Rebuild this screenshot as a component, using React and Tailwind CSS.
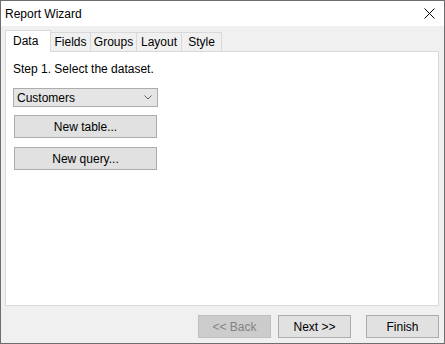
export default function App() {
  const font = { fontFamily: '"Liberation Sans", Arial, sans-serif' };
  return (
    <div
      className="w-[445px] h-[344px] border border-[#6e6e6e] bg-[#f0f0f0] flex flex-col text-[12px] text-black box-border overflow-hidden"
      style={font}
    >
      {/* Title bar */}
      <div className="h-[25px] bg-white flex items-center justify-between shrink-0">
        <span className="pl-[4px] text-[12px] leading-none">Report Wizard</span>
        <svg width="11" height="11" viewBox="0 0 11 11" className="mr-[9px]">
          <path d="M0.5 0.5 L10.5 10.5 M10.5 0.5 L0.5 10.5" stroke="#000" strokeWidth="1" />
        </svg>
      </div>

      {/* Body */}
      <div className="flex flex-col pl-[4px] pr-[5px] pt-[4px] flex-1">
        {/* Tabs */}
        <div className="flex items-end h-[21px] relative z-10">
          <div className="h-[22px] w-[46px] -mb-px bg-white border border-b-0 border-[#d9d9d9] flex items-center pl-[7px] pb-[2px]">
            Data
          </div>
          <div className="h-[19px] w-[41px] -ml-px border border-b-0 border-[#d9d9d9] flex items-center justify-center">
            Fields
          </div>
          <div className="h-[19px] w-[47px] -ml-px border border-b-0 border-[#d9d9d9] flex items-center justify-center">
            Groups
          </div>
          <div className="h-[19px] w-[46px] -ml-px border border-b-0 border-[#d9d9d9] flex items-center justify-center">
            Layout
          </div>
          <div className="h-[19px] w-[41px] -ml-px border border-b-0 border-[#d9d9d9] flex items-center justify-center">
            Style
          </div>
        </div>

        {/* Panel */}
        <div className="h-[255px] bg-white border border-[#d9d9d9] flex flex-col pl-[7px] pt-[9px] shrink-0">
          <div className="h-[16px] leading-[16px]">Step 1. Select the dataset.</div>
          <div className="mt-[11px] w-[145px] h-[19px] bg-[#e5e5e5] border border-[#adadad] flex items-center justify-between pl-[3px] pr-[5px]">
            <span className="leading-none">Customers</span>
            <svg width="8" height="5" viewBox="0 0 8 5">
              <path d="M0.5 0.5 L4 4 L7.5 0.5" stroke="#606060" strokeWidth="1" fill="none" />
            </svg>
          </div>
          <div className="mt-[8px] ml-px w-[143px] h-[23px] bg-[#e1e1e1] border border-[#adadad] flex items-center justify-center">
            New table...
          </div>
          <div className="mt-[9px] ml-px w-[143px] h-[23px] bg-[#e1e1e1] border border-[#adadad] flex items-center justify-center">
            New query...
          </div>
        </div>

        {/* Bottom buttons */}
        <div className="mt-[9px] flex justify-end">
          <div className="w-[73px] h-[23px] bg-[#cccccc] border border-[#bfbfbf] text-[#838383] flex items-center justify-center">
            &lt;&lt; Back
          </div>
          <div className="ml-[7px] w-[73px] h-[23px] bg-[#e1e1e1] border border-[#adadad] flex items-center justify-center">
            Next &gt;&gt;
          </div>
          <div className="ml-[15px] w-[73px] h-[23px] bg-[#e1e1e1] border border-[#adadad] flex items-center justify-center">
            Finish
          </div>
        </div>
      </div>
    </div>
  );
}
